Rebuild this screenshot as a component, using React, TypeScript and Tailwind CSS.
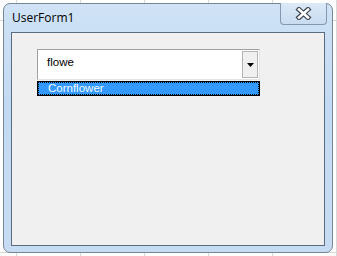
import React from "react";

export default function App() {
  return (
    <div className="w-[337px] h-[256px] overflow-hidden bg-white bg-[linear-gradient(90deg,#d8d8d8_1px,transparent_1px),linear-gradient(180deg,#d8d8d8_1px,transparent_1px)] bg-[size:64px_100%,100%_232px] bg-[position:16px_0,0_20px] pt-[3px] pl-[3px] pr-[4px] pb-[3px]">
      <div className="h-full rounded-[7px] border border-[#7a8797] bg-[linear-gradient(180deg,#cfe2f6_0%,#c2daf3_40%,#c6dcf3_100%)] flex flex-col px-[7px] pb-[6px]">
        <div className="h-[28px] flex items-start justify-between">
          <div className="h-full flex items-center pl-[1px] font-['Open_Sans','Noto_Sans',sans-serif] text-[12px] text-black">
            UserForm1
          </div>
          <div className="-mt-px mr-[-2px] w-[47px] h-[22px] rounded-b-[4px] border border-t-0 border-[#8597ae] bg-[linear-gradient(180deg,#dbe9f8,#c9dcf0)] flex items-center justify-center">
            <svg width="17" height="13" viewBox="0 0 17 13">
              <path d="M4 2.5 L13 10.5 M13 2.5 L4 10.5" stroke="#3e4650" strokeWidth="5" strokeLinecap="square" />
              <path d="M4 2.5 L13 10.5 M13 2.5 L4 10.5" stroke="#ffffff" strokeWidth="2.6" strokeLinecap="square" />
            </svg>
          </div>
        </div>
        <div className="flex-1 border border-[#5b6b80] bg-[#f0f0f0] pl-[25px] pt-[16px]">
          <div className="w-[223px] h-[31px] flex border border-[#a0a0a0] border-r-[#e3e3e3] border-b-[#e3e3e3] bg-white">
            <div className="flex-1 pl-[9px] pt-[4px] font-['Liberation_Sans',Arial,sans-serif] text-[11.5px] text-black">
              flowe
            </div>
            <div className="w-[16px] m-[1px] border border-[#b4b4b4] bg-[#f0f0f0] flex items-center justify-center">
              <svg width="7" height="4" viewBox="0 0 7 4">
                <path d="M0 0 H7 L3.5 4 Z" fill="#000" />
              </svg>
            </div>
          </div>
          <div className="mt-[1px] w-[223px] h-[15px] border border-black bg-white">
            <div className="h-full bg-[#3399ff] outline outline-1 outline-dotted outline-black -outline-offset-1 pl-[10px] font-['Liberation_Sans',Arial,sans-serif] text-[11.5px] leading-[13px] text-[#f4f9ff]">
              Cornflower
            </div>
          </div>
        </div>
      </div>
    </div>
  );
}
